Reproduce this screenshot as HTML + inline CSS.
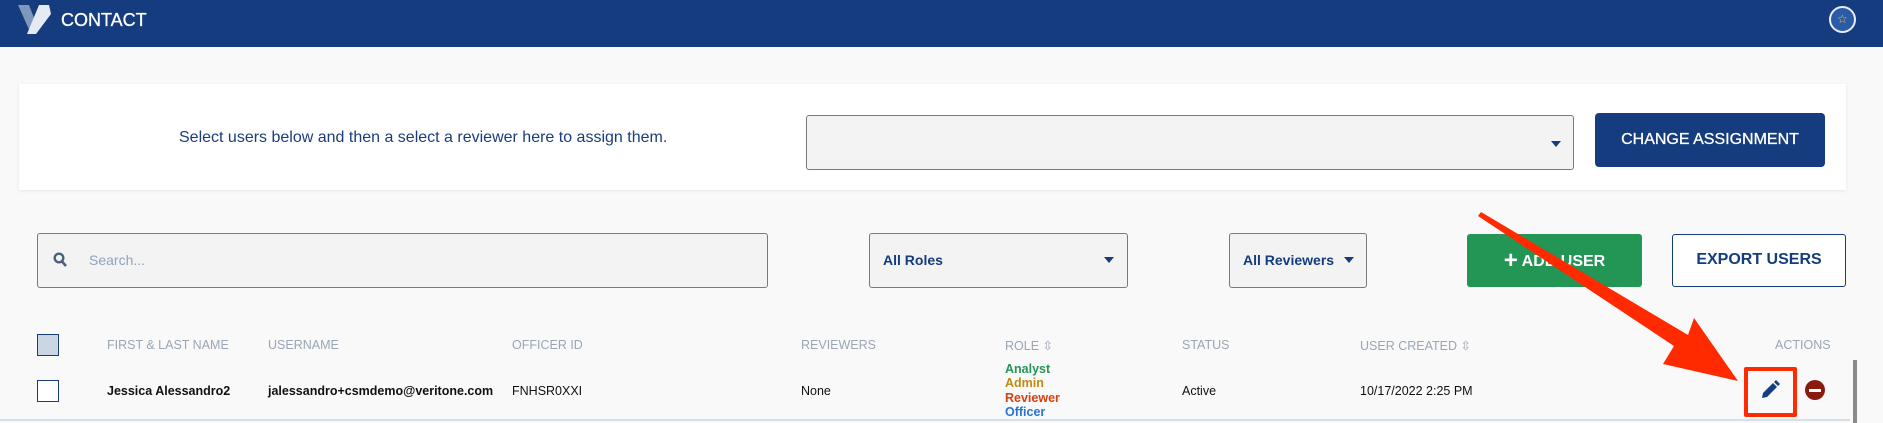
<!DOCTYPE html>
<html><head><meta charset="utf-8"><style>
*{margin:0;padding:0;box-sizing:border-box}
body{width:1883px;height:423px;overflow:hidden;background:#f9f9f9;font-family:"Liberation Sans",Arial,sans-serif;position:relative}
.a{position:absolute}
.hdr{left:0;top:0;width:1883px;height:47px;background:#143c7e}
.card{left:19px;top:84px;width:1827px;height:106px;background:#fff;box-shadow:0 1px 3px rgba(0,0,0,.08)}
.sel{background:#f3f3f3;border:1px solid #7a7a7a;border-radius:3px}
.tri{width:0;height:0;border-left:5px solid transparent;border-right:5px solid transparent;border-top:6px solid #143c7e}
.th{top:338px;font-size:12.5px;color:#9aa6b5}
.td{top:384px;font-size:12.5px;color:#111}
.cb{width:22px;height:22px;border:1.5px solid #143c7e;background:#fff}
</style></head><body>
<div class="a hdr"></div>
<svg class="a" style="left:17px;top:5px" width="34" height="30" viewBox="0 0 34 30"><polygon points="1,0 12,0 19,18 14,29" fill="#7d97bd"/><polygon points="22,0 32,0 34,9 19,29 10,29" fill="#e6ebf3"/></svg>
<div class="a" style="left:61px;top:10px;color:#fff;font-size:18px;-webkit-text-stroke:0.3px #fff">CONTACT</div>
<div class="a" style="left:1829px;top:6px;width:27px;height:27px;border-radius:50%;background:#2a5aa8;border:2px solid #e8eef7"></div>
<div class="a" style="left:1837px;top:12px;color:#f1c232;font-size:12px">☆</div>

<div class="a card"></div>
<div class="a" style="left:179px;top:129px;font-size:16px;color:#1a3d7c">Select users below and then a select a reviewer here to assign them.</div>
<div class="a sel" style="left:806px;top:115px;width:768px;height:55px"></div>
<div class="a tri" style="left:1551px;top:141px"></div>
<div class="a" style="left:1595px;top:113px;width:230px;height:54px;background:#143c7e;border-radius:4px;color:#fff;font-size:16px;line-height:54px;text-align:center;-webkit-text-stroke:0.3px #fff">CHANGE ASSIGNMENT</div>

<div class="a sel" style="left:37px;top:233px;width:731px;height:55px"></div>
<svg class="a" style="left:53px;top:252px" width="15" height="16" viewBox="0 0 15 16"><circle cx="6" cy="6" r="4.3" fill="none" stroke="#4b5f7e" stroke-width="2.4"/><line x1="9" y1="9.5" x2="13" y2="14" stroke="#4b5f7e" stroke-width="2.6"/></svg>
<div class="a" style="left:89px;top:252px;font-size:14px;color:#90a2bd">Search...</div>
<div class="a sel" style="left:869px;top:233px;width:259px;height:55px"></div>
<div class="a" style="left:883px;top:252px;font-size:14px;font-weight:bold;color:#143c7e">All Roles</div>
<div class="a tri" style="left:1104px;top:257px"></div>
<div class="a sel" style="left:1229px;top:233px;width:138px;height:55px"></div>
<div class="a" style="left:1243px;top:252px;font-size:14px;font-weight:bold;color:#143c7e">All Reviewers</div>
<div class="a tri" style="left:1344px;top:257px"></div>
<div class="a" style="left:1467px;top:234px;width:175px;height:53px;background:#239656;border-radius:3px;color:#fff;font-size:16px;font-weight:bold;line-height:53px;text-align:center"><span style="font-size:24px;vertical-align:-2px">+</span> ADD USER</div>
<div class="a" style="left:1672px;top:234px;width:174px;height:53px;background:#fff;border:1.5px solid #143c7e;border-radius:3px;color:#143c7e;font-size:16px;font-weight:bold;line-height:50px;text-align:center">EXPORT USERS</div>

<div class="a cb" style="left:37px;top:334px;background:#c9d6e4"></div>
<div class="a th" style="left:107px">FIRST &amp; LAST NAME</div>
<div class="a th" style="left:268px">USERNAME</div>
<div class="a th" style="left:512px">OFFICER ID</div>
<div class="a th" style="left:801px">REVIEWERS</div>
<div class="a th" style="left:1005px">ROLE ⇳</div>
<div class="a th" style="left:1182px">STATUS</div>
<div class="a th" style="left:1360px">USER CREATED ⇳</div>
<div class="a th" style="left:1775px">ACTIONS</div>

<div class="a cb" style="left:37px;top:380px"></div>
<div class="a td" style="left:107px;font-weight:bold">Jessica Alessandro2</div>
<div class="a td" style="left:268px;font-weight:bold">jalessandro+csmdemo@veritone.com</div>
<div class="a td" style="left:512px">FNHSR0XXI</div>
<div class="a td" style="left:801px">None</div>
<div class="a" style="left:1005px;top:362px;font-size:12.5px;font-weight:bold;line-height:14.3px"><div style="color:#239656">Analyst</div><div style="color:#c08a10">Admin</div><div style="color:#d9400f">Reviewer</div><div style="color:#2a72d6">Officer</div></div>
<div class="a td" style="left:1182px">Active</div>
<div class="a td" style="left:1360px">10/17/2022 2:25 PM</div>
<div class="a" style="left:0;top:419px;width:1850px;height:2px;background:#d6e0ea"></div>
<div class="a" style="left:1853px;top:360px;width:4px;height:63px;background:#8a8a8a"></div>

<svg class="a" style="left:1760px;top:380px" width="20" height="20" viewBox="0 0 20 20"><path d="M2 18 L3 13 L13 3 L17 7 L7 17 Z" fill="#143c7e"/><path d="M14 2 L16 0 L20 4 L18 6 Z" fill="#143c7e"/></svg>
<div class="a" style="left:1805px;top:380px;width:20px;height:20px;border-radius:50%;background:#8b1a0e"></div>
<div class="a" style="left:1809px;top:389px;width:12px;height:3px;background:#fff"></div>
<div class="a" style="left:1744px;top:367px;width:53px;height:50px;border:4px solid #ff2a00;border-radius:2px"></div>

<svg class="a" style="left:0;top:0" width="1883" height="423"><polygon points="1478,216 1481,212 1688,335 1694,318 1738,381 1663,364 1674,346" fill="#ff2a00"/></svg>
</body></html>
